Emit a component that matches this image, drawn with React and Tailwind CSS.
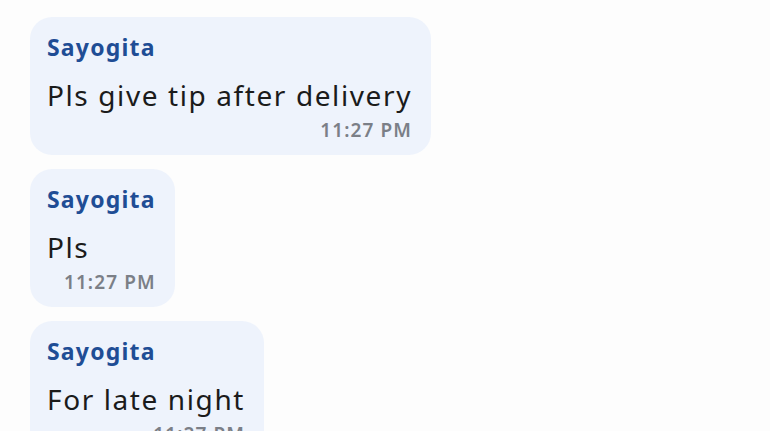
export default function App() {
  const msgs = [
    { text: "Pls give tip after delivery", time: "11:27 PM" },
    { text: "Pls", time: "11:27 PM" },
    { text: "For late night", time: "11:27 PM" },
  ];
  return (
    <div
      className="w-[770px] h-[431px] overflow-hidden bg-[#fdfdfd] pt-[17px] pl-[30px] flex flex-col items-start gap-[14px]"
      style={{ fontFamily: '"Noto Sans", "Open Sans", sans-serif' }}
    >
      {msgs.map((m, i) => (
        <div
          key={i}
          className="bg-[#eef3fc] rounded-[22px] pl-[17px] pr-[19px] pt-[16px] pb-[13px] flex flex-col"
        >
          <div className="text-[23px] leading-[28px] font-bold tracking-[1.2px] text-[#1f4d95]">Sayogita</div>
          <div className="mt-[16px] text-[28px] leading-[36px] tracking-[1.6px] text-[#1b1b1b]">{m.text}</div>
          <div className="mt-[5px] self-end text-[19px] leading-[24px] font-semibold tracking-[1.1px] text-[#7b7f87]">{m.time}</div>
        </div>
      ))}
    </div>
  );
}
